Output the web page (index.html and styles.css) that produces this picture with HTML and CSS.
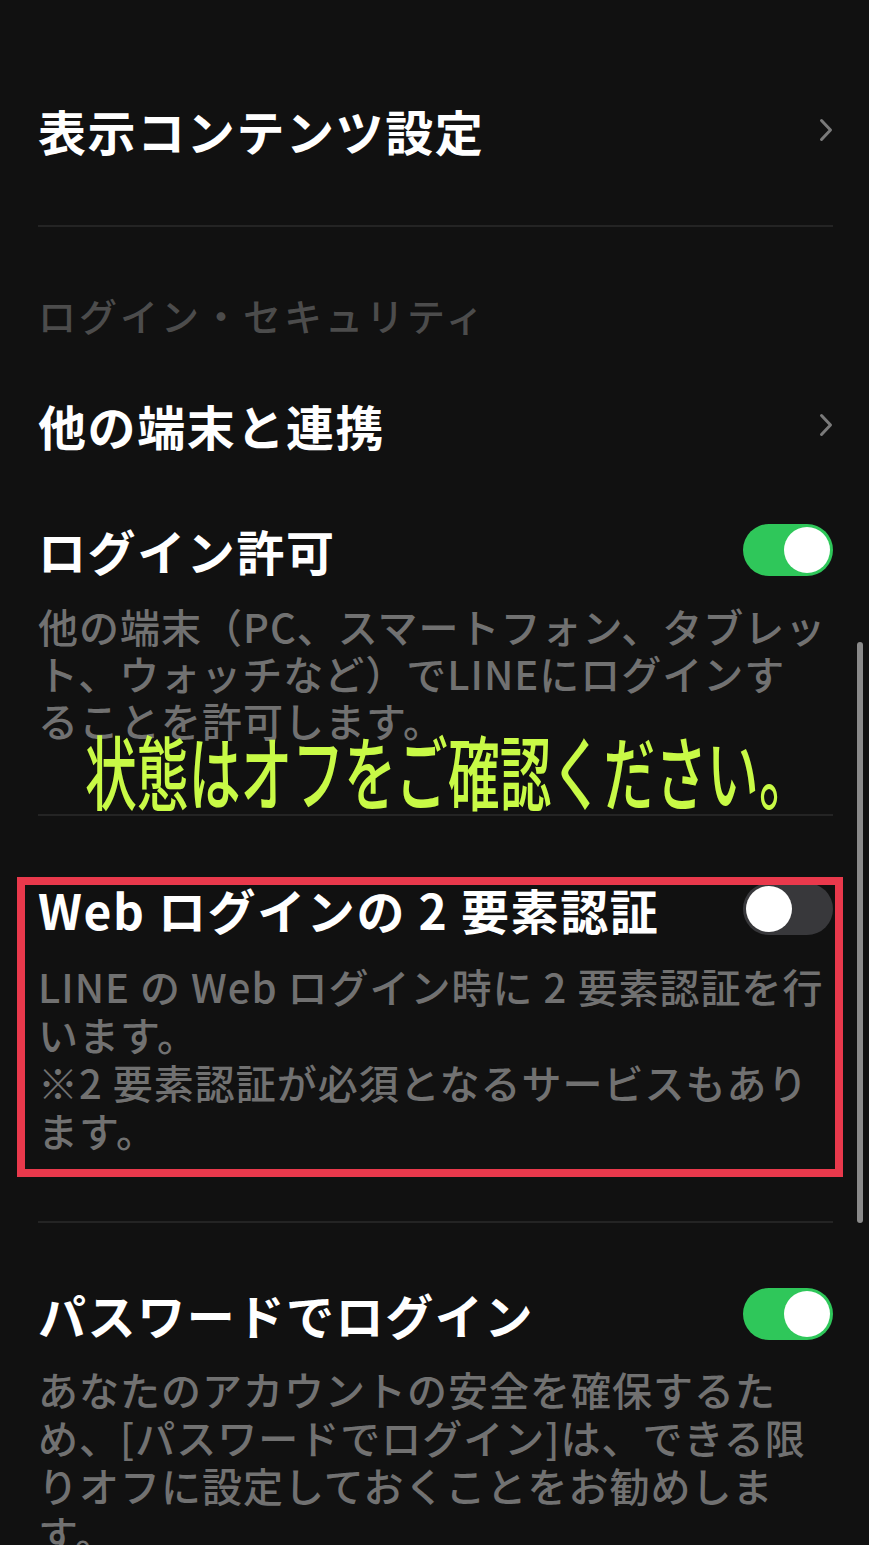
FILE: index.html
```html
<!DOCTYPE html>
<html lang="ja">
<head>
<meta charset="utf-8">
<title>設定</title>
<link rel="stylesheet" href="styles.css">
</head>
<body>
<div class="page">
  <div class="row row-first">
    <span class="title">表示コンテンツ設定</span>
    <svg class="chev" width="14" height="24" viewBox="0 0 14 24"><path d="M2.5 2.5 L11.5 12 L2.5 21.5" fill="none" stroke="#7a7a7a" stroke-width="3" stroke-linecap="round" stroke-linejoin="round"/></svg>
  </div>
  <div class="divider div-1"></div>

  <div class="section-head">ログイン・セキュリティ</div>

  <div class="row row-link">
    <span class="title">他の端末と連携</span>
    <svg class="chev" width="14" height="24" viewBox="0 0 14 24"><path d="M2.5 2.5 L11.5 12 L2.5 21.5" fill="none" stroke="#7a7a7a" stroke-width="3" stroke-linecap="round" stroke-linejoin="round"/></svg>
  </div>

  <div class="row row-login">
    <span class="title">ログイン許可</span>
    <span class="toggle on"><span class="knob"></span></span>
  </div>
  <p class="desc desc-1">他の端末（PC、スマートフォン、タブレッ<br>ト、ウォッチなど）でLINEにログインす<br>ることを許可します。</p>
  <div class="divider div-2"></div>

  <div class="row row-web">
    <span class="title">Web ログインの 2 要素認証</span>
    <span class="toggle off"><span class="knob"></span></span>
  </div>
  <p class="desc desc-2">LINE の Web ログイン時に 2 要素認証を行<br>います。<br>※2 要素認証が必須となるサービスもあり<br>ます。</p>
  <div class="divider div-3"></div>

  <div class="row row-pass">
    <span class="title">パスワードでログイン</span>
    <span class="toggle on"><span class="knob"></span></span>
  </div>
  <p class="desc desc-3">あなたのアカウントの安全を確保するた<br>め、[パスワードでログイン]は、できる限<br>りオフに設定しておくことをお勧めしま<br>す。</p>

  <div class="annot-text">状態はオフをご確認ください。</div>
  <div class="annot-box"></div>
  <div class="scrollbar"></div>
</div>
</body>
</html>
```

FILE: styles.css
```css
html, body {
  margin: 0;
  padding: 0;
  height: 1545px;
  overflow: hidden;
  background: #111111;
}

.page {
  position: relative;
  height: 1545px;
  padding: 0 36px 0 38px;
  font-family: "Noto Sans CJK JP", "Noto Sans", sans-serif;
  color: #ffffff;
  display: flex;
  flex-direction: column;
}

.row {
  display: flex;
  align-items: center;
  justify-content: space-between;
  height: 60px;
  flex: none;
}

.title {
  font-size: 48px;
  font-weight: 700;
  letter-spacing: 1.6px;
  line-height: 60px;
  white-space: nowrap;
}

.chev {
  display: block;
}

.row-first { margin-top: 100px; }
.row-link { margin-top: 56px; }
.row-login { margin-top: 65px; }
.row-web { margin-top: 63px; }
.row-pass { margin-top: 61px; }

.divider {
  height: 2px;
  background: #242424;
  flex: none;
}
.div-1 { margin-top: 65px; }
.div-2 { margin-top: 70px; }
.div-3 { margin-top: 67px; }

.section-head {
  margin-top: 64px;
  font-size: 38px;
  line-height: 48px;
  letter-spacing: 3px;
  color: #4c4c4c;
  font-weight: 500;
  flex: none;
}

.desc {
  margin: 0;
  font-size: 40px;
  line-height: 48px;
  letter-spacing: 1px;
  color: #717171;
  font-weight: 500;
  white-space: nowrap;
  flex: none;
}
.desc-1 { margin-top: 23px; line-height: 47px; }
.desc-2 { margin-top: 23px; }
.desc-3 { margin-top: 21px; }

.toggle {
  width: 90px;
  height: 52px;
  border-radius: 26px;
  box-sizing: border-box;
  padding: 3px;
  display: flex;
  align-items: center;
  flex: none;
}
.toggle.on {
  background: #2fc75a;
  justify-content: flex-end;
}
.toggle.off {
  background: #38383b;
  justify-content: flex-start;
}
.knob {
  width: 46px;
  height: 46px;
  border-radius: 50%;
  background: #ffffff;
}

.annot-text {
  position: absolute;
  left: 85px;
  top: 724px;
  font-size: 81px;
  line-height: 90px;
  font-weight: 500;
  color: #c8fa46;
  white-space: nowrap;
  transform: scaleX(0.64);
  transform-origin: left center;
}

.annot-box {
  position: absolute;
  left: 17px;
  top: 877px;
  width: 826px;
  height: 300px;
  box-sizing: border-box;
  border: 8px solid #e9394c;
}

.scrollbar {
  position: absolute;
  left: 857px;
  top: 642px;
  width: 6px;
  height: 581px;
  border-radius: 3px;
  background: #8a8a8a;
}
```
